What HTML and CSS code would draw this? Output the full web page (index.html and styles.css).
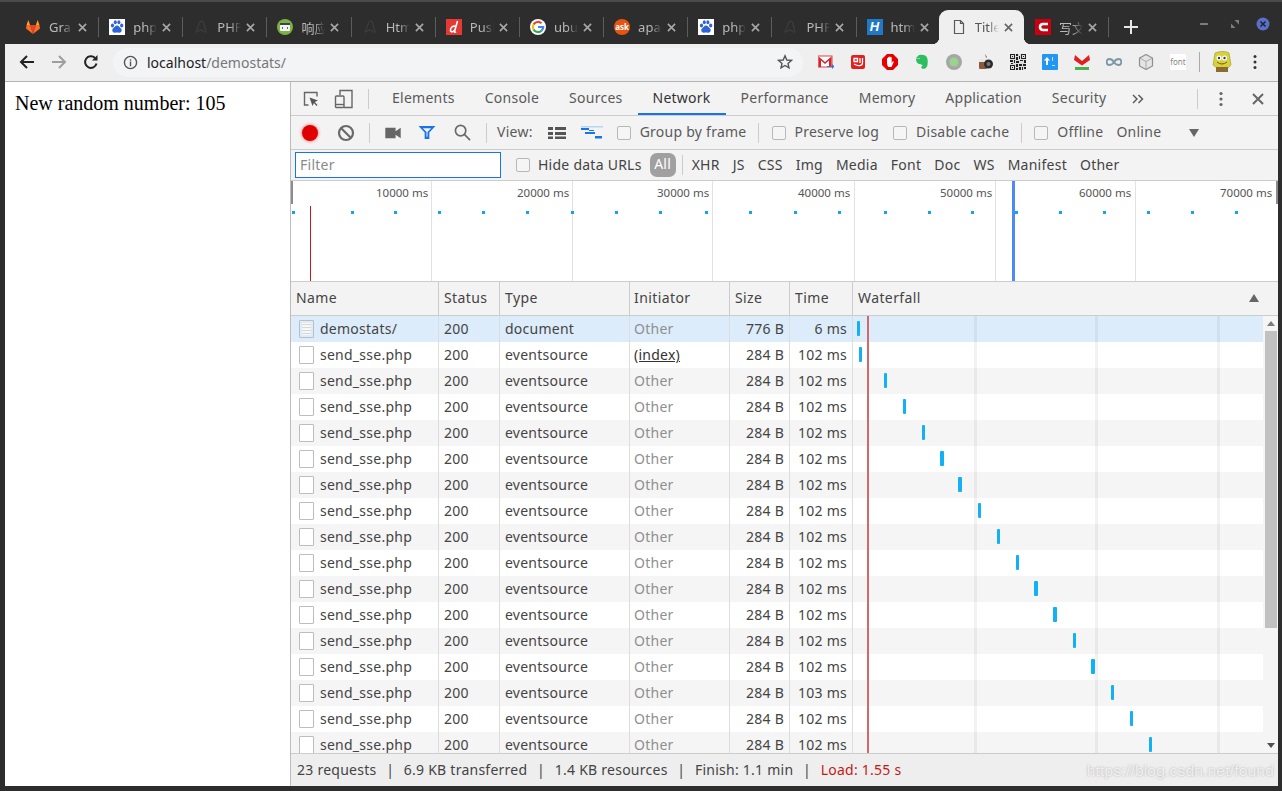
FILE: index.html
```html
<!DOCTYPE html>
<html lang="en">
<head>
<meta charset="utf-8">
<title>Title</title>
<link rel="stylesheet" href="styles.css">
</head>
<body>
<div class="window">
  <div class="strip">
    <div class="tab"><svg class="fav" viewBox="0 0 16 16"><path fill="#e24329" d="M8 15 5.1 6H10.9z"/><path fill="#fc6d26" d="M8 15 1 9.6 1.6 6H5.1zM8 15 15 9.6 14.4 6H10.9z"/><path fill="#fca326" d="M1.6 6 3.3 1 5.1 6zM14.4 6 12.7 1 10.9 6z"/></svg><span class="tname">Gra</span><svg class="tx" viewBox="0 0 10 10"><path d="M1 1 9 9M9 1 1 9"/></svg></div>
    <div class="tab"><svg class="fav" viewBox="0 0 16 16"><rect width="16" height="16" fill="#fff"/><g fill="#2f62d8"><ellipse cx="3.5" cy="6.5" rx="1.6" ry="2.1"/><ellipse cx="6.3" cy="3.2" rx="1.5" ry="2"/><ellipse cx="9.9" cy="3.2" rx="1.5" ry="2"/><ellipse cx="12.7" cy="6.5" rx="1.6" ry="2.1"/><path d="M8 6.5c2 0 2.5 2 4 3 1.5 1.5.5 4.5-2 4.2-1-.2-1.5-.3-2-.3s-1 .1-2 .3c-2.5.3-3.5-2.7-2-4.2 1.5-1 2-3 4-3z"/></g></svg><span class="tname">php</span><svg class="tx" viewBox="0 0 10 10"><path d="M1 1 9 9M9 1 1 9"/></svg></div>
    <div class="tab"><svg class="fav" viewBox="0 0 16 16"><path fill="none" stroke="#3c3c3c" stroke-width="1.3" d="M3 13 7 3c1-1.5 3-1 3.500.5L13 13c-2 1-3-2-5-2s-3 2-5 2z"/></svg><span class="tname">PHP</span><svg class="tx" viewBox="0 0 10 10"><path d="M1 1 9 9M9 1 1 9"/></svg></div>
    <div class="tab"><svg class="fav" viewBox="0 0 16 16"><circle cx="8" cy="8" r="8" fill="#7cb342"/><rect x="3" y="4" width="10" height="8" rx="1" fill="#f3f3f3"/><rect x="3" y="4" width="10" height="2" fill="#37474f"/><path d="M6 8 5 9l1 1M10 8l1 1-1 1" stroke="#37474f" fill="none" stroke-width=".8"/></svg><span class="tname">响应</span><svg class="tx" viewBox="0 0 10 10"><path d="M1 1 9 9M9 1 1 9"/></svg></div>
    <div class="tab"><svg class="fav" viewBox="0 0 16 16"><path fill="none" stroke="#3c3c3c" stroke-width="1.3" d="M3 13 7 3c1-1.5 3-1 3.500.5L13 13c-2 1-3-2-5-2s-3 2-5 2z"/></svg><span class="tname">Html</span><svg class="tx" viewBox="0 0 10 10"><path d="M1 1 9 9M9 1 1 9"/></svg></div>
    <div class="tab"><svg class="fav" viewBox="0 0 16 16"><rect width="16" height="16" fill="#e53935"/><path fill="none" stroke="#fff" stroke-width="1.6" d="M11.500 2 8.500 12.500c-.3 1 .8 1 1.500.3M9.800 7.500C7 6 4 9 4.500 11.500c.4 2 3.200 1.500 4.500-1"/></svg><span class="tname">Push</span><svg class="tx" viewBox="0 0 10 10"><path d="M1 1 9 9M9 1 1 9"/></svg></div>
    <div class="tab"><svg class="fav" viewBox="0 0 16 16"><circle cx="8" cy="8" r="8" fill="#fff"/><path fill="none" stroke="#ea4335" stroke-width="2.2" d="M3.500 5.500A5.200 5.200 0 0 1 11.500 4.300"/><path fill="none" stroke="#fbbc05" stroke-width="2.2" d="M3.500 5.500a5.200 5.200 0 0 0 0 5"/><path fill="none" stroke="#34a853" stroke-width="2.2" d="M3.500 10.500a5.200 5.200 0 0 0 8 1.200"/><path fill="none" stroke="#4285f4" stroke-width="2.2" d="M11.500 11.700A5.200 5.200 0 0 0 13.200 8H8"/></svg><span class="tname">ubuntu</span><svg class="tx" viewBox="0 0 10 10"><path d="M1 1 9 9M9 1 1 9"/></svg></div>
    <div class="tab"><span class="fav askfav">ask</span><span class="tname">apache</span><svg class="tx" viewBox="0 0 10 10"><path d="M1 1 9 9M9 1 1 9"/></svg></div>
    <div class="tab"><svg class="fav" viewBox="0 0 16 16"><rect width="16" height="16" fill="#fff"/><g fill="#2f62d8"><ellipse cx="3.5" cy="6.5" rx="1.6" ry="2.1"/><ellipse cx="6.3" cy="3.2" rx="1.5" ry="2"/><ellipse cx="9.9" cy="3.2" rx="1.5" ry="2"/><ellipse cx="12.7" cy="6.5" rx="1.6" ry="2.1"/><path d="M8 6.5c2 0 2.5 2 4 3 1.5 1.5.5 4.5-2 4.2-1-.2-1.5-.3-2-.3s-1 .1-2 .3c-2.5.3-3.5-2.7-2-4.2 1.5-1 2-3 4-3z"/></g></svg><span class="tname">php</span><svg class="tx" viewBox="0 0 10 10"><path d="M1 1 9 9M9 1 1 9"/></svg></div>
    <div class="tab"><svg class="fav" viewBox="0 0 16 16"><path fill="none" stroke="#3c3c3c" stroke-width="1.3" d="M3 13 7 3c1-1.5 3-1 3.500.5L13 13c-2 1-3-2-5-2s-3 2-5 2z"/></svg><span class="tname">PHP</span><svg class="tx" viewBox="0 0 10 10"><path d="M1 1 9 9M9 1 1 9"/></svg></div>
    <div class="tab tab-before-active"><span class="fav hfav">H</span><span class="tname">html</span><svg class="tx" viewBox="0 0 10 10"><path d="M1 1 9 9M9 1 1 9"/></svg></div>
    <div class="tab tab-active"><svg class="fav" viewBox="0 0 16 16"><path fill="none" stroke="#5a5a5a" stroke-width="1.2" d="M3.500 1.500H9.500L12.500 4.500V14.500H3.500zM9.500 1.500V4.500H12.500"/></svg><span class="tname">Title</span><svg class="tx" viewBox="0 0 10 10"><path d="M1 1 9 9M9 1 1 9"/></svg></div>
    <div class="tab"><svg class="fav" viewBox="0 0 16 16"><rect width="16" height="16" fill="#c8000f"/><path fill="none" stroke="#fff" stroke-width="2.6" d="M13 5H8C4 5 4 11 8 11H13"/></svg><span class="tname">写文章</span><svg class="tx" viewBox="0 0 10 10"><path d="M1 1 9 9M9 1 1 9"/></svg></div>
    <svg class="plus" viewBox="0 0 14 14"><path d="M7 0V14M0 7H14"/></svg>
    <div class="winctl">
      <svg class="wmin" viewBox="0 0 8 2"><rect width="8" height="2" rx=".5"/></svg>
      <svg class="wmax" viewBox="0 0 8 8"><path d="M3.500 0H8V4.500zM0 3.500 4.500 8H0z"/></svg>
      <svg class="wclose" viewBox="0 0 14 14"><circle cx="7" cy="7" r="6.500" fill="#5b6fc7"/><path d="M4.500 4.500l5 5M9.500 4.500l-5 5" stroke="#1d2333" stroke-width="1.5"/></svg>
    </div>
  </div>

  <div class="toolbar">
    <svg class="nav" viewBox="0 0 16 16"><path d="M15 8H2M8 2 2 8l6 6"/></svg>
    <svg class="nav nav-off" viewBox="0 0 16 16"><path d="M1 8H14M8 2l6 6-6 6"/></svg>
    <svg class="nav" viewBox="0 0 16 16"><path d="M13.500 9.500A5.800 5.800 0 1 1 12 4"/><path class="solid" d="M14.500 1V6.500H9z"/></svg>
    <div class="omni">
      <svg class="info" viewBox="0 0 16 16"><circle cx="8" cy="8" r="6.500"/><path d="M8 7V12M8 4.500V6"/></svg>
      <span class="url">localhost<span class="url-path">/demostats/</span></span>
      <svg class="star" viewBox="0 0 16 16"><path d="M8 1.800 9.800 6 14.400 6.400 11 9.400 12 13.900 8 11.500 4 13.900 5 9.400 1.600 6.400 6.200 6z"/></svg>
    </div>
    <div class="exts">
      <svg class="ext" viewBox="0 0 16 16"><rect x="0" y="2" width="14" height="11" fill="#fff" stroke="#d44" stroke-width="1"/><path d="M.5 2.500 7 8l6.500-5.500V13h-2.500V6.500L7 10 3 6.500V13H.5z" fill="#d8232a"/><path d="M9 12H14V10l2.500 2.500L14 15V13H9z" fill="#3b6fd4"/></svg>
      <svg class="ext" viewBox="0 0 16 16"><rect x="1" y="1" width="14" height="14" rx="2" fill="#e0201f"/><path d="M4 4.500H7.500V7.500H4zM10 4V9M12.500 4V9C12.500 12 8 12.500 4 10" fill="none" stroke="#fff" stroke-width="1.3"/></svg>
      <svg class="ext" viewBox="0 0 16 16"><path d="M5 0H11L16 5V11L11 16H5L0 11V5z" fill="#e60000"/><path d="M5 7V4.500c0-.8 1-.8 1 0V3.500c0-.8 1.200-.8 1.200 0V3c0-.8 1.300-.8 1.300 0v.7c0-.8 1.200-.8 1.200 0V9l1-1.500c.5-.6 1.300 0 1 .6L9.500 13H6.500C5.500 12 5 10.500 5 9z" fill="#fff"/></svg>
      <svg class="ext" viewBox="0 0 16 16"><path d="M2 4 5 1H6V4H3zM6 1C8 .5 12 1 13 3.500 14 6 14 10 13 12.500 12 15 8.500 15.500 7.500 14 7 13 7.500 11.500 9 11.500 8 10 5.500 10.500 4 9.500 2.500 8.500 2 6.500 2 4.500H6z" fill="#2dbe60"/></svg>
      <svg class="ext" viewBox="0 0 16 16"><circle cx="8" cy="8" r="8" fill="#a6a6a6"/><circle cx="8" cy="8" r="4.500" fill="#9ad38f"/></svg>
      <svg class="ext" viewBox="0 0 16 16"><path d="M7 0 9 3 8 4z" fill="#666"/><rect x="1" y="5" width="8" height="10" rx="1" fill="#8a5a3a"/><rect x="1" y="5" width="8" height="3" fill="#e8e8e8"/><circle cx="10.500" cy="10" r="4.500" fill="#2b2b2b"/><circle cx="10.500" cy="10" r="2" fill="#777"/></svg>
      <svg class="ext" viewBox="0 0 16 16"><rect width="16" height="16" fill="#ddd"/><path fill="#222" d="M0 0h5v5H0zM11 0h5v5h-5zM0 11h5v5H0zM6 0h2v2H6zM9 2h1v3H9zM6 3h2v3H6zM0 6h3v2H0zM4 6h1v3H4zM6 7h3v2H6zM10 6h3v1h-3zM14 6h2v3h-2zM1 9h2v1H1zM6 10h2v3H6zM9 10h3v2H9zM13 10h3v2h-3zM9 13h2v3H9zM12 13h1v3h-1zM14 13h2v2h-2zM6 14h2v2H6z"/><path fill="#ddd" d="M1 1h3v3H1zM12 1h3v3h-3zM1 12h3v3H1z"/><path fill="#222" d="M2 2h1v1H2zM13 2h1v1h-1zM2 13h1v1H2z"/></svg>
      <svg class="ext" viewBox="0 0 16 16"><rect width="16" height="16" rx="1" fill="#2196f3"/><path d="M5 3 8 6.500H6V11H4V6.500H2z" fill="#fff"/><path d="M10 3h1v4h-1zM10 11h3v1h-3z" fill="#bfe0fb"/></svg>
      <svg class="ext" viewBox="0 0 16 16"><path d="M1 1 8 7 15 1 16 6 8 11.500 0 6z" fill="#e0201f"/><rect x="1" y="13" width="14" height="3" fill="#4caf50"/></svg>
      <svg class="ext" viewBox="0 0 16 16"><path d="M8 8C6.500 5.500 4.500 5 3.200 5 1.700 5 .7 6.400.7 8s1 3 2.500 3C4.500 11 6.500 10.500 8 8c1.500-2.500 3.500-3 4.800-3 1.500 0 2.500 1.400 2.500 3s-1 3-2.500 3C11.500 11 9.500 10.500 8 8z" fill="none" stroke="#7a99a6" stroke-width="1.8"/></svg>
      <svg class="ext" viewBox="0 0 16 16"><path d="M8 .5 14.500 4V12L8 15.500 1.500 12V4z" fill="#e4e4e4" stroke="#8f8f8f" stroke-width="1.2"/><path d="M1.500 4 8 7.500 14.500 4M8 7.500V15.500" fill="none" stroke="#aaa"/></svg>
      <span class="ext fontext">font</span>
    </div>
    <i class="tsep"></i>
    <svg class="avatar" viewBox="0 0 20 22"><path d="M3 2C8 0 14 0 17 2L19 14 16 17H5L1 14z" fill="#d8d23a" stroke="#9a9628" stroke-width=".6"/><circle cx="7" cy="7" r="2.500" fill="#fff"/><circle cx="12.500" cy="7" r="2.500" fill="#fff"/><circle cx="7" cy="7" r="1.200" fill="#1d3a78"/><circle cx="12.500" cy="7" r="1.200" fill="#1d3a78"/><path d="M5 11Q10 15 15 11" fill="none" stroke="#6d5a1e"/><rect x="4" y="16" width="12" height="5" fill="#8d6a32"/></svg>
    <svg class="kebab" viewBox="0 0 4 16"><circle cx="2" cy="2.500" r="1.500"/><circle cx="2" cy="8" r="1.500"/><circle cx="2" cy="13.500" r="1.500"/></svg>
  </div>

  <div class="body">
    <div class="page"><p class="randomnum">New random number: 105</p></div>
    <div class="devtools">
      <div class="dtabs">
        <svg class="dicon di-inspect" viewBox="0 0 18 18"><path class="ol" d="M6.500 15H2.500V2.500H15V6.500"/><path class="fl" d="M7.500 7.500 16 10.500 12.800 12 15.500 15 14.500 16 12 13 10.500 16z"/></svg>
        <svg class="dicon di-device" viewBox="0 0 20 20"><path class="ol" d="M6 6V1.500H18V18.500H10"/><rect class="ol" x="1.500" y="7" width="8.500" height="11.500" rx="1"/><path class="ol" d="M1.500 15.500H10"/></svg>
        <i class="dsep sep-tabs"></i>
        <span class="dtab">Elements</span><span class="dtab">Console</span><span class="dtab">Sources</span><span class="dtab dtab-on">Network</span><span class="dtab">Performance</span><span class="dtab">Memory</span><span class="dtab">Application</span><span class="dtab">Security</span>
        <svg class="more" viewBox="0 0 12 10"><path d="M1 1 5 5 1 9M6.500 1 10.500 5 6.500 9"/></svg>
        <i class="dsep sep-right"></i>
        <svg class="dkebab" viewBox="0 0 4 16"><circle cx="2" cy="2.500" r="1.600"/><circle cx="2" cy="8" r="1.600"/><circle cx="2" cy="13.500" r="1.600"/></svg>
        <svg class="dclose" viewBox="0 0 12 12"><path d="M1 1 11 11M11 1 1 11"/></svg>
      </div>

      <div class="dtools">
        <span class="rec"></span>
        <svg class="ticon t-clear" viewBox="0 0 18 18"><circle cx="9" cy="9" r="7"/><path d="M4 4 14 14"/></svg>
        <i class="dsep s1"></i>
        <svg class="ticon t-cam" viewBox="0 0 18 14"><path d="M0 1H12V5L18 1V13L12 9V13H0z"/></svg>
        <svg class="ticon t-filter" viewBox="0 0 18 16"><path d="M0 1H18L11.500 8V15H6.500V8zM4.500 3.500 8.500 7.500V12.500H9.500V7.500L13.500 3.500z" fill-rule="evenodd"/></svg>
        <svg class="ticon t-search" viewBox="0 0 18 18"><circle cx="7" cy="7" r="5.500"/><path d="M11 11 17 17"/></svg>
        <i class="dsep s2"></i>
        <span class="lab view">View:</span>
        <svg class="ticon t-list" viewBox="0 0 18 12"><path d="M0 0H5V3H0zM7 0H18V3H7zM0 5H5V8H0zM7 5H18V8H7zM0 9.500H5V12H0zM7 9.500H18V12H7z"/></svg>
        <svg class="ticon t-fall" viewBox="0 0 22 13"><path d="M0 0H22V1.500H0z" fill="#b9d4f5"/><path d="M0 2H8V4H0zM4 6H14V8H4zM14 10H21V12.500H14zM8 4H13V5H8z" fill="#1a73e8"/></svg>
        <span class="cb c1"></span><span class="lab">Group by frame</span>
        <i class="dsep s3"></i>
        <span class="cb c2"></span><span class="lab">Preserve log</span>
        <span class="cb c3"></span><span class="lab">Disable cache</span>
        <i class="dsep s4"></i>
        <span class="cb c4"></span><span class="lab">Offline</span>
        <span class="lab online">Online</span>
        <svg class="ticon t-drop" viewBox="0 0 10 8"><path d="M0 0H10L5 8z"/></svg>
      </div>

      <div class="dfilter">
        <div class="finput">Filter</div>
        <span class="cb c5"></span><span class="lab dark">Hide data URLs</span>
        <span class="pill">All</span>
        <i class="dsep s5"></i>
        <span class="ft">XHR</span><span class="ft">JS</span><span class="ft">CSS</span><span class="ft">Img</span><span class="ft">Media</span><span class="ft">Font</span><span class="ft">Doc</span><span class="ft">WS</span><span class="ft">Manifest</span><span class="ft">Other</span>
      </div>

      <div class="overview">
        <i class="ogrid" style="left:140px"></i><i class="ogrid" style="left:281px"></i><i class="ogrid" style="left:421px"></i><i class="ogrid" style="left:563px"></i><i class="ogrid" style="left:704px"></i><i class="ogrid" style="left:844px"></i>
        <span class="olab" style="left:85px">10000 ms</span><span class="olab" style="left:226px">20000 ms</span><span class="olab" style="left:366px">30000 ms</span><span class="olab" style="left:507px">40000 ms</span><span class="olab" style="left:649px">50000 ms</span><span class="olab" style="left:788px">60000 ms</span><span class="olab" style="left:929px">70000 ms</span>
        <i class="odot" style="left:1px"></i><i class="odot" style="left:60px"></i><i class="odot" style="left:103px"></i><i class="odot" style="left:147px"></i><i class="odot" style="left:191px"></i><i class="odot" style="left:235px"></i><i class="odot" style="left:280px"></i><i class="odot" style="left:324px"></i><i class="odot" style="left:368px"></i><i class="odot" style="left:414px"></i><i class="odot" style="left:458px"></i><i class="odot" style="left:503px"></i><i class="odot" style="left:547px"></i><i class="odot" style="left:593px"></i><i class="odot" style="left:637px"></i><i class="odot" style="left:680px"></i><i class="odot" style="left:724px"></i><i class="odot" style="left:768px"></i><i class="odot" style="left:812px"></i><i class="odot" style="left:856px"></i><i class="odot" style="left:900px"></i><i class="odot" style="left:944px"></i>
        <i class="ored"></i><i class="oblue"></i><i class="ohandle oh-l"></i><i class="ohandle oh-r"></i>
      </div>

      <div class="thead">
        <span class="th">Name</span><span class="th">Status</span><span class="th">Type</span><span class="th">Initiator</span><span class="th">Size</span><span class="th">Time</span>
        <span class="th th-fall">Waterfall<svg class="sortup" viewBox="0 0 10 8"><path d="M5 0 10 8H0z"/></svg></span>
      </div>

      <div class="tbody">
        <div class="rows">
          <div class="row row-sel"><span class="td name"><i class="file file-doc"></i>demostats/</span><span class="td">200</span><span class="td">document</span><span class="td muted">Other</span><span class="td num">776 B</span><span class="td num">6 ms</span><span class="td wf"><i class="bar" style="left:4px"></i></span></div>
          <div class="row"><span class="td name"><i class="file"></i>send_sse.php</span><span class="td">200</span><span class="td">eventsource</span><span class="td"><u>(index)</u></span><span class="td num">284 B</span><span class="td num">102 ms</span><span class="td wf"><i class="bar" style="left:6px"></i></span></div>
          <div class="row"><span class="td name"><i class="file"></i>send_sse.php</span><span class="td">200</span><span class="td">eventsource</span><span class="td muted">Other</span><span class="td num">284 B</span><span class="td num">102 ms</span><span class="td wf"><i class="bar" style="left:31px"></i></span></div>
          <div class="row"><span class="td name"><i class="file"></i>send_sse.php</span><span class="td">200</span><span class="td">eventsource</span><span class="td muted">Other</span><span class="td num">284 B</span><span class="td num">102 ms</span><span class="td wf"><i class="bar" style="left:50px"></i></span></div>
          <div class="row"><span class="td name"><i class="file"></i>send_sse.php</span><span class="td">200</span><span class="td">eventsource</span><span class="td muted">Other</span><span class="td num">284 B</span><span class="td num">102 ms</span><span class="td wf"><i class="bar" style="left:69px"></i></span></div>
          <div class="row"><span class="td name"><i class="file"></i>send_sse.php</span><span class="td">200</span><span class="td">eventsource</span><span class="td muted">Other</span><span class="td num">284 B</span><span class="td num">102 ms</span><span class="td wf"><i class="bar bar-wide" style="left:87px"></i></span></div>
          <div class="row"><span class="td name"><i class="file"></i>send_sse.php</span><span class="td">200</span><span class="td">eventsource</span><span class="td muted">Other</span><span class="td num">284 B</span><span class="td num">102 ms</span><span class="td wf"><i class="bar bar-wide" style="left:105px"></i></span></div>
          <div class="row"><span class="td name"><i class="file"></i>send_sse.php</span><span class="td">200</span><span class="td">eventsource</span><span class="td muted">Other</span><span class="td num">284 B</span><span class="td num">102 ms</span><span class="td wf"><i class="bar" style="left:125px"></i></span></div>
          <div class="row"><span class="td name"><i class="file"></i>send_sse.php</span><span class="td">200</span><span class="td">eventsource</span><span class="td muted">Other</span><span class="td num">284 B</span><span class="td num">102 ms</span><span class="td wf"><i class="bar" style="left:144px"></i></span></div>
          <div class="row"><span class="td name"><i class="file"></i>send_sse.php</span><span class="td">200</span><span class="td">eventsource</span><span class="td muted">Other</span><span class="td num">284 B</span><span class="td num">102 ms</span><span class="td wf"><i class="bar" style="left:163px"></i></span></div>
          <div class="row"><span class="td name"><i class="file"></i>send_sse.php</span><span class="td">200</span><span class="td">eventsource</span><span class="td muted">Other</span><span class="td num">284 B</span><span class="td num">102 ms</span><span class="td wf"><i class="bar bar-wide" style="left:181px"></i></span></div>
          <div class="row"><span class="td name"><i class="file"></i>send_sse.php</span><span class="td">200</span><span class="td">eventsource</span><span class="td muted">Other</span><span class="td num">284 B</span><span class="td num">102 ms</span><span class="td wf"><i class="bar bar-wide" style="left:200px"></i></span></div>
          <div class="row"><span class="td name"><i class="file"></i>send_sse.php</span><span class="td">200</span><span class="td">eventsource</span><span class="td muted">Other</span><span class="td num">284 B</span><span class="td num">102 ms</span><span class="td wf"><i class="bar" style="left:220px"></i></span></div>
          <div class="row"><span class="td name"><i class="file"></i>send_sse.php</span><span class="td">200</span><span class="td">eventsource</span><span class="td muted">Other</span><span class="td num">284 B</span><span class="td num">102 ms</span><span class="td wf"><i class="bar bar-wide" style="left:238px"></i></span></div>
          <div class="row"><span class="td name"><i class="file"></i>send_sse.php</span><span class="td">200</span><span class="td">eventsource</span><span class="td muted">Other</span><span class="td num">284 B</span><span class="td num">103 ms</span><span class="td wf"><i class="bar" style="left:258px"></i></span></div>
          <div class="row"><span class="td name"><i class="file"></i>send_sse.php</span><span class="td">200</span><span class="td">eventsource</span><span class="td muted">Other</span><span class="td num">284 B</span><span class="td num">102 ms</span><span class="td wf"><i class="bar" style="left:277px"></i></span></div>
          <div class="row"><span class="td name"><i class="file"></i>send_sse.php</span><span class="td">200</span><span class="td">eventsource</span><span class="td muted">Other</span><span class="td num">284 B</span><span class="td num">102 ms</span><span class="td wf"><i class="bar" style="left:296px"></i></span></div>
          <i class="wgrid" style="left:683px"></i><i class="wgrid" style="left:804px"></i><i class="wgrid" style="left:926px"></i><i class="wred"></i>
        </div>
        <div class="sbar">
          <svg class="sarrow" viewBox="0 0 8 5"><path d="M4 0 8 5H0z"/></svg>
          <div class="sthumb"></div>
          <div class="strack"></div>
          <svg class="sarrow sarrow-d" viewBox="0 0 8 5"><path d="M0 0H8L4 5z"/></svg>
        </div>
      </div>

      <div class="dstatus">
        <span>23 requests</span><b class="pipe">|</b><span>6.9 KB transferred</span><b class="pipe">|</b><span>1.4 KB resources</span><b class="pipe">|</b><span>Finish: 1.1 min</span><b class="pipe">|</b><span class="load">Load: 1.55 s</span>
        <span class="wmark">https://blog.csdn.net/found</span>
      </div>
    </div>
  </div>
</div>
</body>
</html>
```

FILE: styles.css
```css
* { box-sizing: border-box; }
html, body { margin: 0; padding: 0; }
body { width: 1282px; height: 791px; overflow: hidden; background: #2d2d2d; font-family: "Noto Sans", "Noto Sans CJK SC", sans-serif; }
i { display: block; font-style: normal; }
.window { display: flex; flex-direction: column; width: 1282px; height: 791px; border-top: 2px solid #4a4a4a; padding-bottom: 5px; }

/* tab strip */
.strip { display: flex; align-items: stretch; height: 42px; padding: 8px 0 0 15px; background: #2d2d2d; flex: none; }
.tab { position: relative; display: flex; align-items: center; width: 84.17px; height: 34px; padding: 0 0 0 10px; color: #b9b9b9; font-size: 13px; flex: none; }
.tab::after { content: ""; position: absolute; right: 0; top: 7px; height: 20px; width: 1px; background: #5c5c5c; }
.tab-before-active::after { display: none; }
.tab-active { width: 85px; margin-left: -2px; padding-left: 12px; margin-right: 1.17px; background: #efefef; border-radius: 9px 9px 0 0; color: #555; }
.tab-active::before { content: ""; position: absolute; left: -7px; bottom: 0; width: 7px; height: 7px; background: radial-gradient(circle at 0 0, transparent 7px, #efefef 7.5px); }
.tab-active::after { left: auto; right: -7px; top: auto; bottom: 0; width: 7px; height: 7px; background: radial-gradient(circle at 100% 0, transparent 7px, #efefef 7.5px); }
.fav { width: 16px; height: 16px; flex: none; }
.askfav { border-radius: 50%; background: #e8540f; color: #fff; font-size: 8px; font-weight: 700; line-height: 16px; text-align: center; }
.hfav { background: #2178c4; color: #fff; font: italic 700 13px/16px "Liberation Sans", sans-serif; text-align: center; }
.tname { width: 24px; margin-left: 8px; overflow: hidden; white-space: nowrap; -webkit-mask-image: linear-gradient(90deg, #000 55%, transparent); mask-image: linear-gradient(90deg, #000 55%, transparent); }
.tx { width: 9px; height: 9px; margin-left: 5px; flex: none; }
.tx path { stroke: #a8a8a8; stroke-width: 1.8; fill: none; }
.tab-active .tx path { stroke: #666; }
.plus { width: 14px; height: 14px; margin: 10px 0 0 15px; flex: none; }
.plus path { stroke: #e8e8e8; stroke-width: 2; fill: none; }
.winctl { display: flex; align-items: center; margin-left: auto; height: 28px; padding-right: 12px; }
.wmin { width: 8px; height: 2px; margin-right: 23px; fill: #7d7d7d; }
.wmax { width: 8px; height: 8px; margin-right: 17px; fill: #7d7d7d; }
.wclose { width: 14px; height: 14px; }

/* browser toolbar */
.toolbar { display: flex; align-items: center; height: 38px; margin: 0 4px 0 5px; padding: 0 0 1px 14px; background: #efefef; border-bottom: 1px solid #b4b4b4; flex: none; }
.nav { width: 16px; height: 16px; margin-right: 16px; flex: none; }
.nav path { fill: none; stroke: #222; stroke-width: 2; }
.nav .solid { fill: #222; stroke: none; }
.nav-off path { stroke: #9e9e9e; }
.omni { display: flex; align-items: center; width: 690px; height: 29px; margin-left: -2px; padding: 0 10px; background: #f3f4f6; border-radius: 15px; flex: none; }
.info { width: 15px; height: 15px; flex: none; }
.info circle, .info path { fill: none; stroke: #555; stroke-width: 1.5; }
.url { margin-left: 9px; font-size: 14px; color: #222; }
.url-path { color: #777; }
.star { width: 16px; height: 16px; margin-left: auto; }
.star path { fill: none; stroke: #555; stroke-width: 1.4; }
.exts { display: flex; align-items: center; gap: 16px; margin-left: 15px; flex: none; }
.ext { display: block; width: 16px; height: 16px; flex: none; }
.fontext { width: 16px; height: 16px; background: #fff; color: #888; font: 8px/16px "Noto Sans", sans-serif; text-align: center; overflow: hidden; }
.tsep { width: 1px; height: 20px; margin-left: 13px; background: #aaa; flex: none; }
.avatar { width: 20px; height: 22px; margin-left: 12px; flex: none; }
.kebab { width: 4px; height: 16px; margin-left: 21px; fill: #333; flex: none; }

/* split */
.body { display: flex; flex: 1; min-height: 0; margin: 0 4px; }
.page { width: 285px; margin-left: 1px; background: #fff; flex: none; }
.randomnum { margin: 10px 0 0 10px; font: 20px/23px "Liberation Serif", serif; color: #000; }
.devtools { display: flex; flex-direction: column; width: 988px; border-left: 1px solid #bdbdbd; background: #f3f3f3; color: #5a5a5a; font-size: 14px; letter-spacing: .25px; flex: none; }

/* devtools tabs */
.dtabs { display: flex; align-items: center; height: 34px; padding-left: 11px; border-bottom: 1px solid #ccc; flex: none; }
.dicon { flex: none; }
.di-inspect { width: 18px; height: 18px; }
.di-device { width: 20px; height: 20px; margin-left: 14px; }
.ol { fill: none; stroke: #666; stroke-width: 1.4; }
.fl { fill: #555; }
.dsep { width: 1px; height: 20px; background: #ccc; flex: none; }
.sep-tabs { margin: 0 8px 0 14px; }
.dtab { display: flex; align-items: center; height: 33px; padding: 0 15px 2px; color: #5a5a5a; flex: none; white-space: nowrap; }
.dtab-on { color: #333; box-shadow: inset 0 -2px 0 #1a73e8; }
.more { width: 12px; height: 10px; margin-left: 11px; flex: none; }
.more path { fill: none; stroke: #555; stroke-width: 1.4; }
.sep-right { margin-left: auto; }
.dkebab { width: 4px; height: 16px; margin-left: 21px; fill: #666; flex: none; }
.dclose { width: 12px; height: 12px; margin: 0 14px 0 29px; flex: none; }
.dclose path { stroke: #666; stroke-width: 2; fill: none; }

/* network toolbar */
.dtools { display: flex; align-items: center; height: 34px; padding-left: 11px; border-bottom: 1px solid #ccc; flex: none; white-space: nowrap; }
.rec { width: 16px; height: 16px; border-radius: 50%; background: #e00000; box-shadow: 0 0 3px 1px rgba(224,0,0,.35); flex: none; }
.ticon { flex: none; }
.t-clear { width: 18px; height: 18px; margin-left: 19px; }
.t-clear circle, .t-clear path { fill: none; stroke: #6a6a6a; stroke-width: 2.2; }
.s1 { margin-left: 14px; }
.t-cam { width: 18px; height: 12px; margin-left: 14px; fill: #666; }
.t-filter { width: 18px; height: 15px; margin-left: 16px; fill: #1a73e8; }
.t-search { width: 17px; height: 17px; margin-left: 18px; }
.t-search circle, .t-search path { fill: none; stroke: #6a6a6a; stroke-width: 1.8; }
.s2 { margin-left: 15px; }
.lab { padding-bottom: 2px; color: #5a5a5a; flex: none; }
.lab.dark { color: #444; margin-left: 8px; }
.view { margin-left: 10px; }
.t-list { width: 18px; height: 12px; margin-left: 15px; fill: #555; }
.t-fall { width: 22px; height: 13px; margin-left: 15px; }
.cb { width: 14px; height: 14px; background: #f5f5f5; border: 1px solid #b8b8b8; border-radius: 2px; flex: none; }
.c1 { margin: 0 9px 0 14px; }
.s3 { margin-left: 12px; }
.c2 { margin: 0 8px 0 13px; }
.c3 { margin: 0 9px 0 14px; }
.s4 { margin-left: 12px; }
.c4 { margin: 0 9px 0 12px; }
.online { margin-left: 13px; }
.t-drop { width: 10px; height: 8px; margin-left: 28px; fill: #666; }

/* filter row */
.dfilter { display: flex; align-items: center; height: 31px; padding-left: 4px; border-bottom: 1px solid #ccc; flex: none; white-space: nowrap; color: #444; }
.finput { display: flex; align-items: center; width: 206px; height: 26px; padding: 0 0 2px 4px; background: #fff; border: 1px solid #1a73e8; color: #8a8a8a; flex: none; }
.c5 { margin-left: 15px; }
.pill { width: 26px; height: 24px; margin-left: 8px; border-radius: 7px; background: #a0a0a0; color: #fff; line-height: 22px; text-align: center; flex: none; }
.s5 { margin: 0 2.5px 0 6px; }
.ft { padding: 0 6.5px 2px; flex: none; }

/* overview */
.overview { position: relative; height: 101px; background: #fff; border-bottom: 1px solid #ccc; overflow: hidden; letter-spacing: 0; flex: none; }
.ogrid { position: absolute; top: 0; bottom: 0; width: 1px; background: #e2e2e2; }
.olab { position: absolute; top: 4px; font-size: 11.5px; color: #555; white-space: nowrap; }
.odot { position: absolute; top: 30px; width: 3px; height: 3px; background: #0fa8e4; }
.ored { position: absolute; left: 19px; top: 25px; bottom: 0; width: 1px; background: #c8181a; }
.oblue { position: absolute; left: 721px; top: 0; bottom: 0; width: 3px; background: #4d8af5; }
.ohandle { position: absolute; top: 0; height: 23px; width: 2px; background: #8c8c8c; }
.oh-l { left: 0; }
.oh-r { right: 0; }

/* table */
.thead, .row { display: grid; grid-template-columns: 148px 61px 130px 100px 60px 63px 1fr; }
.thead { height: 34px; border-bottom: 1px solid #ccc; background: #f3f3f3; flex: none; }
.th { display: flex; align-items: center; padding: 0 0 2px 5px; border-right: 1px solid #ccc; color: #444; letter-spacing: .4px; }
.th:nth-child(4) { padding-left: 4px; }
.th-fall { border-right: 0; justify-content: space-between; padding-right: 19px; }
.sortup { width: 10px; height: 8px; fill: #666; }
.tbody { display: flex; height: 437px; flex: none; overflow: hidden; }
.rows { position: relative; width: 972px; height: 437px; overflow: hidden; flex: none; }
.row { height: 26px; background: #fff; color: #444; }
.row:nth-child(odd) { background: #f5f5f5; }
.row.row-sel { background: #dcecfb; }
.td { position: relative; display: flex; align-items: center; padding: 0 5px 2px; border-right: 1px solid #ddd; white-space: nowrap; overflow: hidden; }
.td:nth-child(4) { padding-left: 4px; }
.name { padding-left: 8px; }
.muted { color: #8f8f8f; }
.num { justify-content: flex-end; }
.wf { border-right: 0; padding: 0; }
.td u { color: #333; }
.file { width: 15px; height: 18px; margin: 2px 6px 0 0; background: #fff; border: 1px solid #bdbdbd; border-radius: 1px; flex: none; }
.file-doc { background: repeating-linear-gradient(#d8d8d8 0 1px, #f7f7f7 1px 3px); background-clip: content-box; padding: 2px; background-color: #f7f7f7; }
.bar { position: absolute; top: 5px; width: 3px; height: 15px; background: #12b0f5; border-radius: 1px; }
.bar-wide { width: 4px; }
.wgrid { position: absolute; top: 0; bottom: 0; width: 3px; background: rgba(0,0,0,.05); }
.wred { position: absolute; left: 576px; top: 0; bottom: 0; width: 2px; background: #d06a6a; }
.sbar { display: flex; flex-direction: column; align-items: center; width: 15px; background: #f5f5f5; flex: none; }
.sarrow { width: 8px; height: 5px; margin: 5px 0 5px; fill: #7a7a7a; flex: none; }
.sthumb { width: 12px; height: 297px; background: #c1c1c1; flex: none; }
.strack { flex: 1; }
.sarrow-d { fill: #505050; }

/* status */
.dstatus { position: relative; display: flex; align-items: center; flex: 1; padding: 0 0 2px 6px; border-top: 1px solid #ccc; background: #eeeeee; color: #444; letter-spacing: .25px; white-space: nowrap; }
.pipe { margin: 0 9.7px; font-weight: 400; }
.load { color: #c41a16; }
.wmark { position: absolute; right: 4px; top: 8px; font: 15.5px "Liberation Sans", sans-serif; letter-spacing: .2px; color: rgba(255,255,255,.75); text-shadow: 0 0 2px rgba(120,120,120,.6); }
```
